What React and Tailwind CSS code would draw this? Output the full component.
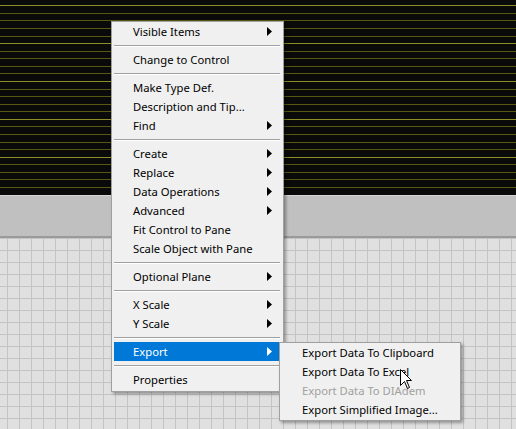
import React from 'react';

const mainItems = [
  { label: 'Visible Items', sub: true },
  'sep',
  { label: 'Change to Control' },
  'sep',
  { label: 'Make Type Def.' },
  { label: 'Description and Tip...' },
  { label: 'Find', sub: true },
  'sep',
  { label: 'Create', sub: true },
  { label: 'Replace', sub: true },
  { label: 'Data Operations', sub: true },
  { label: 'Advanced', sub: true },
  { label: 'Fit Control to Pane' },
  { label: 'Scale Object with Pane' },
  'sep',
  { label: 'Optional Plane', sub: true },
  'sep',
  { label: 'X Scale', sub: true },
  { label: 'Y Scale', sub: true },
  'sep',
  { label: 'Export', sub: true, active: true },
  'sep',
  { label: 'Properties' },
];

const exportItems = [
  { label: 'Export Data To Clipboard' },
  { label: 'Export Data To Excel' },
  { label: 'Export Data To DIAdem', disabled: true },
  { label: 'Export Simplified Image...' },
];

function Arrow({ white }) {
  return (
    <svg width="5" height="9" viewBox="0 0 5 9" className="shrink-0">
      <polygon points="0,0 5,4.5 0,9" fill={white ? '#ffffff' : '#000000'} />
    </svg>
  );
}

function MenuItem({ label, sub, active, disabled, indent = 'pl-[19px]' }) {
  let tone = 'text-black';
  if (active) tone = 'bg-[#0078d7] text-white';
  if (disabled) tone = 'text-[#a0a0a0]';
  return (
    <div className={`flex h-[19px] items-center justify-between pr-[8px] leading-none ${indent} ${tone}`}>
      <span className="whitespace-nowrap">{label}</span>
      {sub && <Arrow white={active} />}
    </div>
  );
}

function Separator() {
  return (
    <div className="flex h-[9px] flex-col justify-center">
      <div className="h-px bg-[#a0a0a0]" />
      <div className="h-px bg-white" />
    </div>
  );
}

// yellow trace lines of the black plot area
function PlotLines() {
  const lines = [];
  for (let i = 0; i < 26; i++) {
    const y = Math.round(5.3 + 7.57 * i);
    if (y > 194) break;
    lines.push(
      <line
        key={i}
        x1="0"
        x2="516"
        y1={y + 0.5}
        y2={y + 0.5}
        stroke={i % 5 === 0 ? '#8e8e26' : '#585812'}
        strokeWidth="1"
      />
    );
  }
  return (
    <svg width="516" height="195" shapeRendering="crispEdges" className="block">
      {lines}
    </svg>
  );
}

function Cursor() {
  return (
    <svg width="13" height="21" viewBox="0 0 13 21" className="block">
      <polygon
        points="0.5,0.5 0.5,16.5 4.5,12.5 7.5,19.5 9.5,18.5 6.5,11.5 11.5,11.5"
        fill="#ffffff"
        stroke="#000000"
        strokeWidth="1"
        strokeLinejoin="miter"
      />
    </svg>
  );
}

export default function App() {
  return (
    <div className="relative h-[429px] w-[516px] overflow-hidden font-['Noto_Sans',sans-serif] text-[11.25px]">
      <div className="h-[195px] bg-[#0a0a0a]">
        <PlotLines />
      </div>
      <div className="h-px bg-[#d6d6d6]" />
      <div className="h-[40px] bg-[#c0c0c0]" />
      <div className="h-[2px] bg-[#9a9a9a]" />
      <div className="h-[191px] bg-[#e0e0e0] bg-[linear-gradient(to_right,#c4c4c4_1px,transparent_1px),linear-gradient(to_bottom,#c4c4c4_1px,transparent_1px)] [background-size:12px_12px] [background-position:7px_0px]" />

      <div className="absolute left-[111px] top-[21px] w-[173px] border border-[#a0a0a0] bg-[#f0f0f0] pb-[2px] pl-[2px] pr-[3px] shadow-[2px_2px_3px_rgba(0,0,0,0.35)]">
        {mainItems.map((it, i) =>
          it === 'sep' ? <Separator key={i} /> : <MenuItem key={i} {...it} />
        )}
      </div>

      <div className="absolute left-[279px] top-[342px] w-[182px] border border-[#a0a0a0] bg-[#f0f0f0] pb-px shadow-[2px_2px_3px_rgba(0,0,0,0.35)]">
        {exportItems.map((it, i) => (
          <MenuItem key={i} {...it} indent="pl-[22px]" />
        ))}
      </div>

      <div className="absolute left-[400px] top-[369px]">
        <Cursor />
      </div>
    </div>
  );
}
